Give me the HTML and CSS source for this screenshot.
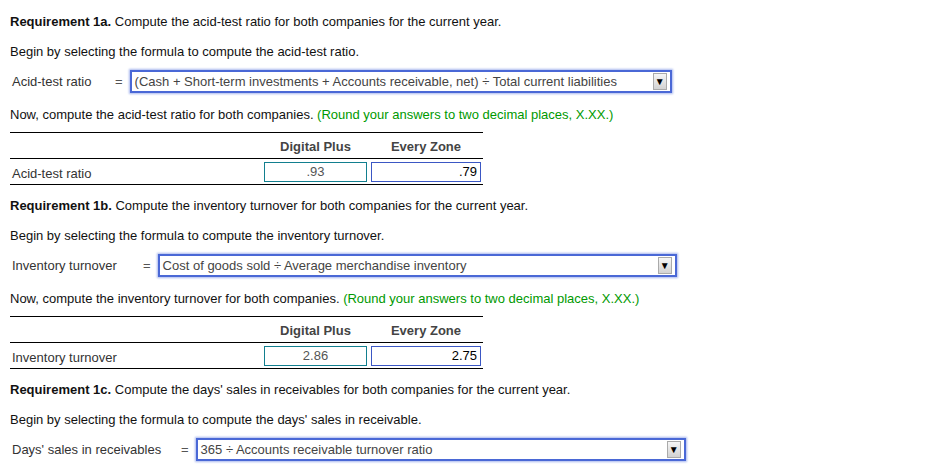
FILE: index.html
```html
<!DOCTYPE html>
<html lang="en">
<head>
    <meta charset="UTF-8">
    <title>Ratios</title>
    <link rel="stylesheet" href="styles.css">
</head>
<body>
    <div class="page">

        <div class="part">
            <p class="req"><b>Requirement 1a.</b> Compute the acid-test ratio for both companies for the current year.</p>
            <p class="line">Begin by selecting the formula to compute the acid-test ratio.</p>
            <div class="formula">
                <span class="flabel flabel-a">Acid-test ratio</span>
                <span class="eq">=</span>
                <div class="pick pick-a">
                    <span class="ptext">(Cash + Short-term investments + Accounts receivable, net) ÷ Total current liabilities</span>
                    <span class="arrow">▼</span>
                </div>
            </div>
            <p class="line now">Now, compute the acid-test ratio for both companies. <span class="hint">(Round your answers to two decimal places, X.XX.)</span></p>
            <table class="grid">
                <colgroup><col class="c1"><col class="c2"><col class="c3"></colgroup>
                <tr class="head"><th></th><th>Digital Plus</th><th>Every Zone</th></tr>
                <tr class="row">
                    <td class="rlabel">Acid-test ratio</td>
                    <td><div class="box box-dp">.93</div></td>
                    <td><div class="box box-ez">.79</div></td>
                </tr>
            </table>
        </div>

        <div class="part">
            <p class="req"><b>Requirement 1b.</b> Compute the inventory turnover for both companies for the current year.</p>
            <p class="line">Begin by selecting the formula to compute the inventory turnover.</p>
            <div class="formula">
                <span class="flabel flabel-b">Inventory turnover</span>
                <span class="eq">=</span>
                <div class="pick pick-b">
                    <span class="ptext">Cost of goods sold ÷ Average merchandise inventory</span>
                    <span class="arrow">▼</span>
                </div>
            </div>
            <p class="line now">Now, compute the inventory turnover for both companies. <span class="hint">(Round your answers to two decimal places, X.XX.)</span></p>
            <table class="grid">
                <colgroup><col class="c1"><col class="c2"><col class="c3"></colgroup>
                <tr class="head"><th></th><th>Digital Plus</th><th>Every Zone</th></tr>
                <tr class="row">
                    <td class="rlabel">Inventory turnover</td>
                    <td><div class="box box-dp">2.86</div></td>
                    <td><div class="box box-ez">2.75</div></td>
                </tr>
            </table>
        </div>

        <div class="part">
            <p class="req"><b>Requirement 1c.</b> Compute the days' sales in receivables for both companies for the current year.</p>
            <p class="line">Begin by selecting the formula to compute the days' sales in receivable.</p>
            <div class="formula">
                <span class="flabel flabel-c">Days' sales in receivables</span>
                <span class="eq">=</span>
                <div class="pick pick-c">
                    <span class="ptext">365 ÷ Accounts receivable turnover ratio</span>
                    <span class="arrow">▼</span>
                </div>
            </div>
        </div>

    </div>
</body>
</html>
```

FILE: styles.css
```css
*{margin: 0;padding: 0;box-sizing: border-box;}
body{font-family: "Liberation Sans", Arial, sans-serif;font-size: 13px;color: #111;background: #fff;}
.page{padding: 14px 0 0 10px;}

.part{margin-bottom: 13px;}
.req, .line{line-height: 16px;}
.req{margin-bottom: 14px;}
.hint{color: #009900;}
.now{margin-top: 14px;margin-bottom: 9px;}

.formula{display: flex;align-items: center;height: 23px;margin-top: 10px;}
.flabel{color: #333;padding-left: 2px;flex: none;}
.flabel-a{width: 105px;}
.flabel-b{width: 133px;}
.flabel-c{width: 171px;}
.eq{color: #555;margin-right: 7px;}
.pick{display: flex;align-items: center;justify-content: space-between;height: 23px;border: 2px solid #4a68d6;box-shadow: 0 0 2px 1px #a9b8ee;padding: 0 3px 0 3px;color: #444;}
.pick-a{width: 542px;}
.pick-b{width: 519px;}
.pick-c{width: 490px;}
.ptext{white-space: nowrap;}
.arrow{width: 14px;height: 17px;font-size: 10px;line-height: 16px;text-align: center;color: #000;border: 1px solid #aaa;background: linear-gradient(#f6f6f6, #d2d2d2);}

.grid{width: 473px;border-collapse: collapse;table-layout: fixed;border-top: 1px solid #000;}
.c1{width: 254px;}
.c2{width: 107px;}
.c3{width: 112px;}
.head{height: 26px;border-bottom: 1px solid #000;}
.head th{font-weight: bold;color: #444;text-align: left;padding: 2px 0 0 0;}
.head th:nth-child(2){text-align: center;width: 103px;padding-right: 4px;}
.head th:nth-child(3){text-align: center;padding-right: 2px;}
.row{height: 26px;border-bottom: 1px solid #000;}
.rlabel{color: #333;padding-left: 2px;padding-top: 3px;}
.box{height: 20px;line-height: 18px;border: 1px solid #127f8f;}
.box-dp{width: 103px;text-align: center;color: #555;}
.box-ez{width: 110px;text-align: right;padding-right: 3px;color: #000;border-color: #3b57c4;}
```
